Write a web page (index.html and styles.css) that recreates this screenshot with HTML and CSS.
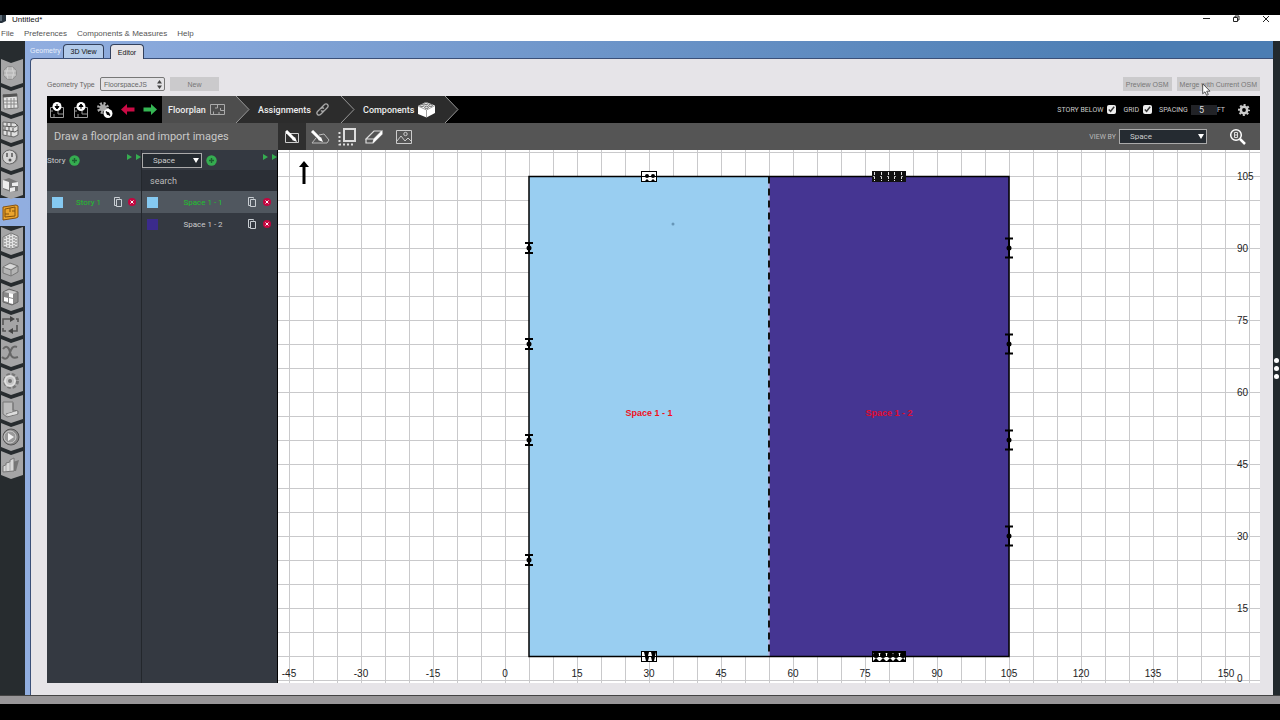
FILE: index.html
```
<!DOCTYPE html>
<html lang="en">
<head>
    <meta charset="UTF-8">
    <meta name="viewport" content="width=device-width, initial-scale=1.0">
    <title>Untitled*</title>
    <link rel="stylesheet" href="styles.css">
</head>
<body>

    <header class="titlebar">
        <svg class="app-icon" width="8" height="9" viewBox="0 0 8 9"><path d="M0 0h6v6l-4 2H0z" fill="#26323d"/><path d="M1 0v6" stroke="#8a9aa8"/></svg>
        <h1>Untitled*</h1>
        <div class="window-buttons">
            <button type="button" aria-label="Minimize"><svg width="8" height="8" viewBox="0 0 8 8"><path d="M1 3.500h7"/></svg></button>
            <button type="button" aria-label="Restore"><svg width="8" height="8" viewBox="0 0 8 8"><path d="M1.500 2.500h4v4h-4zM3 2V1h4v4H6"/></svg></button>
            <button type="button" aria-label="Close"><svg width="8" height="8" viewBox="0 0 8 8"><path d="M1 1l6 6M7 1L1 7"/></svg></button>
        </div>
    </header>

    <nav class="menubar">
        <a href="#">File</a>
        <a href="#">Preferences</a>
        <a href="#">Components &amp; Measures</a>
        <a href="#">Help</a>
    </nav>

    <svg class="defs" width="0" height="0" aria-hidden="true">
        <defs>
            <path id="tab" d="M1 1l10 4 12-4v24l-12 4-10-4z"/>
            <g id="copy" fill="none" stroke="#c9ced3"><path d="M2.500 8.500h-2v-8h5v1"/><path d="M2.500 2.500h5v7h-5z"/></g>
            <g id="remove"><circle cx="4" cy="4" r="4" fill="#c3063f"/><path d="M2.500 2.500l3 3M5.500 2.500l-3 3" stroke="#fff"/></g>
            <g id="add"><circle cx="5.500" cy="5.500" r="5.200" fill="#35ad50"/><path d="M5.500 3v5M3 5.500h5" stroke="#1c5f31" stroke-width="1.400"/></g>
            <g id="forward" fill="#35ad50"><path d="M0 0l5 3-5 3zM9 0l5 3-5 3z"/></g>
        </defs>
    </svg>

    <div class="window">
        <aside class="rail">
            <button type="button" aria-label="Site"><svg viewBox="0 0 25 28"><use href="#tab"/><circle cx="10" cy="15" r="6.500" fill="#b9b9b9" stroke="#8b8b8b"/><path d="M4 13h12M4 17h12M8 9q-3 6 0 12M12 9q3 6 0 12" fill="none" stroke="#d8d8d8" stroke-width=".8"/></svg></button>
            <button type="button" aria-label="Schedules"><svg viewBox="0 0 25 28"><use href="#tab"/><path d="M3 9l14-1 1 14-14 1z" fill="#e6e6e6" stroke="#777"/><path d="M3 10l14-1" stroke="#555" stroke-width="3"/><path d="M4 15h13M4 18h13M7 12v10M11 12v10M14 12v10" stroke="#888"/></svg></button>
            <button type="button" aria-label="Constructions"><svg viewBox="0 0 25 28"><use href="#tab"/><path d="M3 8l12 1 3 3v9l-4 2-11-2z" fill="#e0e0e0" stroke="#666"/><path d="M3 12l12 1M3 16l12 2M7 9v3M11 9v3M5 13v3M9 13v4M13 14v4M7 17v4M11 18v4M15 13l3-2M15 18l3-2" stroke="#555"/></svg></button>
            <button type="button" aria-label="Loads"><svg viewBox="0 0 25 28"><use href="#tab"/><circle cx="11" cy="15" r="7" fill="#858585"/><circle cx="9.500" cy="15" r="7" fill="#d5d5d5" stroke="#666"/><path d="M7 11v4M12 11v4" stroke="#555" stroke-width="1.500"/><circle cx="10" cy="18" r="1.500" fill="#555"/></svg></button>
            <button type="button" aria-label="Space types"><svg viewBox="0 0 25 28"><use href="#tab"/><path d="M3 10l6-2 9 4v9l-7 1-8-3z" fill="#777"/><path d="M3 10l6 2v8l-6-2zM12 13l6-1v4h-6zM10 18l5-1v4l-5 1z" fill="#ededed"/></svg></button>
            <button type="button" class="current" aria-label="Geometry"><svg viewBox="0 0 25 28"><path d="M3 9l13-2 2 1v11l-2 1-13 2z" fill="#eba42d" stroke="#8a530d"/><path d="M5 11v8l10-1V9zM10 10v4M15 13h-3M5 16h4" fill="none" stroke="#80500f"/></svg></button>
            <button type="button" aria-label="Facility"><svg viewBox="0 0 25 28"><use href="#tab"/><path d="M3 11l8-4 7 3v11l-7 2-8-2z" fill="#e2e2e2" stroke="#777"/><path d="M5 11v10M8 10v12M11 8v14M14 10v12M16 11v10" stroke="#777" stroke-dasharray="2 1"/></svg></button>
            <button type="button" aria-label="Spaces"><svg viewBox="0 0 25 28"><use href="#tab"/><path d="M3 13l7-4 8 3v6l-7 4-8-3z" fill="#b4b4b4" stroke="#777"/><path d="M3 13l8 3 7-4M11 16v6" fill="none" stroke="#777"/><path d="M4 13l6-3 6 2-5 3z" fill="#d9d9d9"/></svg></button>
            <button type="button" aria-label="Thermal zones"><svg viewBox="0 0 25 28"><use href="#tab"/><path d="M3 10l6-3 9 3v10l-6 3-9-3z" fill="#888" stroke="#666"/><path d="M4 15l4 1v4l-4-1zM9 16l4 1v5l-4-1zM9 10l4 1v5l-4-1z" fill="#fff"/><path d="M4 10l5-2 8 2-4 2z" fill="#ccc"/></svg></button>
            <button type="button" aria-label="HVAC systems"><svg viewBox="0 0 25 28"><use href="#tab"/><path d="M3 15V9h8M17 15v6h-5M18 12V9h-2M3 18v3h3" fill="none" stroke="#555" stroke-width="1.600"/><path d="M10 6l5 3-5 3zM13 18l-5 3 5 3z" fill="#444"/></svg></button>
            <button type="button" aria-label="Output variables"><svg viewBox="0 0 25 28"><use href="#tab"/><path d="M3 11c3-4 6-2 7 3s3 7 8 5M17 9c-5-2-6 3-8 8s-5 4-7 2" fill="none" stroke="#666" stroke-width="2"/></svg></button>
            <button type="button" aria-label="Simulation settings"><svg viewBox="0 0 25 28"><use href="#tab"/><circle cx="11" cy="15" r="6" fill="none" stroke="#777" stroke-width="4" stroke-dasharray="3 1.700"/><circle cx="10" cy="15" r="5" fill="#c5c5c5" stroke="#e0e0e0" stroke-width="2"/><circle cx="10" cy="15" r="2" fill="#777"/></svg></button>
            <button type="button" aria-label="Measures"><svg viewBox="0 0 25 28"><use href="#tab"/><path d="M3 8h10v8l5 1v3l-11 3-4-3z" fill="#bdbdbd" stroke="#777"/><path d="M6 20l11-3M13 9v9" stroke="#777"/><path d="M7 20l10-3v3L8 22z" fill="#ddd"/></svg></button>
            <button type="button" aria-label="Run simulation"><svg viewBox="0 0 25 28"><use href="#tab"/><circle cx="11" cy="15" r="8" fill="#858585" stroke="#555"/><circle cx="10" cy="15" r="6" fill="#999" stroke="#ccc"/><path d="M8 11l6 4-6 4z" fill="#f2f2f2"/></svg></button>
            <button type="button" aria-label="Results"><svg viewBox="0 0 25 28"><use href="#tab"/><path d="M13 12l6-2-3 11h-3z" fill="#777"/><path d="M3 16l3-1v-2l4-1v-2l4-2v13l-11 1z" fill="#d8d8d8" stroke="#777"/><path d="M6 15v6M10 12v9" stroke="#aaa"/></svg></button>
        </aside>

        <main class="geometry">
            <div class="tabs">
                <h2>Geometry</h2>
                <button type="button" class="tab">3D View</button>
                <button type="button" class="tab active">Editor</button>
            </div>

            <div class="page">
                <div class="type-row">
                    <label for="geometryType">Geometry Type</label>
                    <span class="type-select">
                        <select id="geometryType"><option>FloorspaceJS</option></select>
                        <svg width="5" height="9" viewBox="0 0 5 9"><path d="M0 3.500L2.500 0 5 3.500zM0 5.500h5L2.500 9z" fill="#444"/></svg>
                    </span>
                    <button type="button" class="btn new" disabled>New</button>
                    <span class="spacer"></span>
                    <button type="button" class="btn">Preview OSM</button>
                    <span class="merge">
                        <button type="button" class="btn">Merge with Current OSM</button>
                        <svg class="pointer" width="9" height="13" viewBox="0 0 9 13"><path d="M.7.8v10l2.300-2 1.600 3.500 1.700-.8-1.600-3.300h3.300z" fill="#fff" stroke="#444" stroke-width=".9"/></svg>
                    </span>
                </div>

                <div class="editor">
                    <div class="steps">
                        <div class="file-tools">
                            <button type="button" aria-label="Open floorplan"><svg width="16" height="18" viewBox="0 0 16 18"><path d="M4 6.500H1.500v10h13v-10H12M5 16v-3M9 10v3h5M2 10h2" fill="none" stroke="#999"/><circle cx="8" cy="5.500" r="4.500" fill="#fff"/><path d="M8 3v3M6 5.500h4L8 8z" fill="#000" stroke="#000"/></svg></button>
                            <button type="button" aria-label="Save floorplan"><svg width="16" height="18" viewBox="0 0 16 18"><path d="M4 6.500H1.500v10h13v-10H12M5 16v-3M9 10v3h5M2 10h2" fill="none" stroke="#999"/><circle cx="8" cy="5.500" r="4.500" fill="#fff"/><path d="M8 8V5M6 5.500h4L8 3z" fill="#000" stroke="#000"/></svg></button>
                            <button type="button" aria-label="Project settings"><svg width="16" height="18" viewBox="0 0 16 18"><circle cx="6" cy="7" r="3.500" fill="#aaa"/><circle cx="6" cy="7" r="4.500" fill="none" stroke="#aaa" stroke-width="3" stroke-dasharray="2 1.530"/><circle cx="11" cy="12.500" r="4.500" fill="#fff"/><path d="M9 10.500l4 4" stroke="#000" stroke-width="1.600"/><circle cx="11" cy="12.500" r="1.500"/></svg></button>
                            <button type="button" aria-label="Undo"><svg width="14" height="11" viewBox="0 0 14 11"><path d="M0 5.500L6 0v3.500h7.500v4H6V11z" fill="#cb0b45"/></svg></button>
                            <button type="button" aria-label="Redo"><svg width="14" height="11" viewBox="0 0 14 11"><path d="M14 5.500L8 0v3.500H.5v4H8V11z" fill="#35b653"/></svg></button>
                        </div>
                        <button type="button" class="step on">Floorplan
                            <svg width="15" height="12" viewBox="0 0 15 12"><path d="M.5.500h14v10H.5zM3.500 10V7.500M7.500 1v3H5M10.500 4v2.500H14M9 10V8" fill="none" stroke="#aaa"/></svg>
                        </button>
                        <svg class="chevron on" width="14" height="27" viewBox="0 0 14 27"><path d="M0 0l13 13.500L0 27z"/><path class="edge" d="M0 0l13 13.500L0 27"/></svg>
                        <button type="button" class="step assign">Assignments
                            <svg width="13" height="13" viewBox="0 0 13 13"><g fill="none" stroke="#aaa" stroke-width="1.300"><path d="M5 5l3-3q2-2 3.500-.5T11 5L8.500 7.500Q6.500 9 5 7.500"/><path d="M8 8l-3 3q-2 2-3.500.5T2 8l2.500-2.500Q6.500 4 8 5.500"/></g></svg>
                        </button>
                        <svg class="chevron" width="14" height="27" viewBox="0 0 14 27"><path d="M0 0l13 13.500L0 27z"/><path class="edge" d="M0 0l13 13.500L0 27"/></svg>
                        <button type="button" class="step comps">Components
                            <svg width="19" height="17" viewBox="0 0 19 17"><path d="M1 5l8-4 9 3.500V12l-8.500 4.500L1 13z" fill="#fff"/><path d="M1 5l8.500 4L18 4.500M9.500 9v7" fill="none" stroke="#888" stroke-width=".8"/><g fill="#ddd" stroke="#555" stroke-width=".8"><ellipse cx="9" cy="2.500" rx="2" ry="1.200"/><ellipse cx="5" cy="4.500" rx="2" ry="1.200"/><ellipse cx="13.500" cy="4.300" rx="2" ry="1.200"/><ellipse cx="9.500" cy="6.300" rx="2" ry="1.200"/></g></svg>
                        </button>
                        <svg class="chevron last" width="14" height="27" viewBox="0 0 14 27"><path d="M0 0l13 13.500L0 27z"/><path class="edge" d="M0 0l13 13.500L0 27"/></svg>
                        <span class="spacer"></span>
                        <div class="grid-settings">
                            <label>STORY BELOW <input type="checkbox" checked></label>
                            <label>GRID <input type="checkbox" checked></label>
                            <label class="spacing">SPACING <input type="text" value="5"></label>
                            <span>FT</span>
                            <button type="button" aria-label="Settings"><svg width="12" height="12" viewBox="0 0 12 12"><circle cx="6" cy="6" r="3.200" fill="none" stroke="#ccc" stroke-width="2.600"/><circle cx="6" cy="6" r="5" fill="none" stroke="#ccc" stroke-width="2" stroke-dasharray="2 1.927" stroke-dashoffset="1"/></svg></button>
                        </div>
                    </div>

                    <div class="toolbar">
                        <p class="hint">Draw a floorplan and import images</p>
                        <div class="draw-tools">
                            <button type="button" class="selected" aria-label="Rectangle"><svg width="16" height="14" viewBox="0 0 16 14"><path d="M1.500 3.500h13v9h-13z" fill="none" stroke="#ccc"/><path d="M2 1l8 8" stroke="#fff" stroke-width="3"/><path d="M11 7l2 5-5-2z" fill="#fff"/></svg></button>
                            <button type="button" aria-label="Polygon"><svg width="20" height="14" viewBox="0 0 20 14"><path d="M9 5l5-1 5 6-2 3H2l4-5" fill="none" stroke="#bbb"/><path d="M2 1l8 8" stroke="#fff" stroke-width="3"/><path d="M11 7l2 5-5-2z" fill="#fff"/></svg></button>
                            <button type="button" aria-label="Fill"><svg width="18" height="18" viewBox="0 0 18 18"><path d="M6 1h11v12H6z" fill="none" stroke="#ddd" stroke-width="2"/><path d="M1.500 4v12.500H15" fill="none" stroke="#ddd" stroke-width="2" stroke-dasharray="2 2"/></svg></button>
                            <button type="button" aria-label="Eraser"><svg width="18" height="14" viewBox="0 0 18 14"><path d="M1 9l8-8h8l-8 8zM1 9v4h7l9-9V1M9 9l-1 4" fill="none" stroke="#ddd" stroke-width="1.200"/><path d="M9 9l8-8v3l-9 9z" fill="#fff"/></svg></button>
                            <button type="button" class="image-tool" aria-label="Import image"><svg width="16" height="14" viewBox="0 0 16 14"><path d="M.5.5h15v13H.5zM1 11l4-5 4 5 3-3 3 3" fill="none" stroke="#ccc"/><circle cx="9.500" cy="4" r="1.700" fill="none" stroke="#ccc"/></svg></button>
                        </div>
                        <span class="spacer"></span>
                        <label class="view-label" for="viewBy">VIEW BY</label>
                        <span class="dropdown view"><select id="viewBy"><option>Space</option></select></span>
                        <button type="button" class="zoom-fit" aria-label="Zoom to fit"><svg width="17" height="17" viewBox="0 0 17 17"><circle cx="7" cy="7" r="5.300" fill="none" stroke="#fff" stroke-width="1.500"/><path d="M11 11l5 5" stroke="#fff" stroke-width="2.500"/><path d="M5.500 4.500h3v5h-3z" fill="none" stroke="#ddd"/><path d="M5 7h4" stroke="#ddd"/></svg></button>
                    </div>

                    <div class="workspace">
                        <section class="stories">
                            <div class="list-head">
                                <h3>Story</h3>
                                <button type="button" aria-label="Add story"><svg width="11" height="11"><use href="#add"/></svg></button>
                                <span class="spacer"></span>
                                <button type="button" class="expand" aria-label="Expand stories"><svg width="14" height="6"><use href="#forward"/></svg></button>
                            </div>
                            <div class="search-gap"></div>
                            <div class="item picked">
                                <i class="swatch"></i><span>Story 1</span>
                                <button type="button" aria-label="Copy"><svg width="8" height="10"><use href="#copy"/></svg></button>
                                <button type="button" aria-label="Delete"><svg width="8" height="8"><use href="#remove"/></svg></button>
                            </div>
                        </section>

                        <section class="spaces">
                            <div class="list-head">
                                <span class="dropdown"><select aria-label="Object type"><option>Space</option></select></span>
                                <button type="button" aria-label="Add space"><svg width="11" height="11"><use href="#add"/></svg></button>
                                <span class="spacer"></span>
                                <button type="button" class="expand" aria-label="Expand spaces"><svg width="14" height="6"><use href="#forward"/></svg></button>
                            </div>
                            <input class="search" type="text" placeholder="search" aria-label="search">
                            <div class="item picked">
                                <i class="swatch"></i><span>Space 1 - 1</span>
                                <button type="button" aria-label="Copy"><svg width="8" height="10"><use href="#copy"/></svg></button>
                                <button type="button" aria-label="Delete"><svg width="8" height="8"><use href="#remove"/></svg></button>
                            </div>
                            <div class="item">
                                <i class="swatch purple"></i><span>Space 1 - 2</span>
                                <button type="button" aria-label="Copy"><svg width="8" height="10"><use href="#copy"/></svg></button>
                                <button type="button" aria-label="Delete"><svg width="8" height="8"><use href="#remove"/></svg></button>
                            </div>
                        </section>

                        <!-- 5 ft = 24px, origin at (227, 530) -->
                        <div class="canvas">
                            <svg width="100%" height="100%">
                                <defs>
                                    <pattern id="grid" x="11" y="2" width="24" height="24" patternUnits="userSpaceOnUse"><path d="M.5 0v24M0 .5h24" stroke="#c9c9cb" fill="none"/></pattern>
                                    <g id="door"><path d="M-4-5h8M-4 5h8M0-5V5" stroke="#000" stroke-width="2"/><circle r="2.500"/></g>
                                    <g id="window"><path d="M-4-9.500h8M-4 9.500h8M0-9v18" stroke="#000" stroke-width="2"/><circle r="2.500"/></g>
                                </defs>
                                <rect width="100%" height="100%" fill="url(#grid)"/>
                                <path d="M26 34V15" stroke="#000" stroke-width="3"/><path d="M21 17l5-6 5 6z"/>

                                <rect x="251" y="26.500" width="240" height="480" fill="#99cef1"/>
                                <rect x="491" y="26.500" width="240" height="480" fill="#453592"/>
                                <path d="M491 26.500v480" stroke="#b9b4e0" stroke-width="1.500"/>
                                <path d="M491 26.500v480" stroke="#111" stroke-width="2" stroke-dasharray="7 5"/>
                                <path d="M251 26.500h480v480H251z" fill="none" stroke="#000" stroke-width="1.500"/>

                                <use href="#door" x="251" y="98"/>
                                <use href="#door" x="251" y="194"/>
                                <use href="#door" x="251" y="290"/>
                                <use href="#door" x="251" y="410"/>
                                <use href="#window" x="731" y="98"/>
                                <use href="#window" x="731" y="194"/>
                                <use href="#window" x="731" y="290"/>
                                <use href="#window" x="731" y="386"/>

                                <g stroke="#000"><rect x="363.500" y="21.500" width="15" height="10" fill="#fff"/><path d="M364 26.500h14"/></g>
                                <circle cx="369" cy="26" r="2"/><circle cx="375" cy="26" r="2"/><path d="M367 31l2-2 2 2zM373 31l2-2 2 2z"/>
                                <g stroke="#000"><rect x="363.500" y="501.500" width="15" height="10" fill="#fff"/><path d="M364 506.500h14"/></g>
                                <path d="M366 502h5l-1 4h-3zM373 502h5l-1 4h-3zM367 507h4l-1 4h-2zM373 507h4l-1 4h-2z"/>

                                <rect x="594" y="21" width="34" height="11" fill="#111"/>
                                <path d="M596.500 22v9M603.500 22v9M610.500 22v9M616.500 22v9M623.500 22v9" stroke="#ddd" stroke-dasharray="3 1"/><path d="M595 26.500h32" stroke="#aaa" stroke-dasharray="2 5"/>
                                <rect x="594.500" y="501.500" width="33" height="10" fill="#fff" stroke="#000"/>
                                <path d="M595 502.500h33M595 506.500h33" stroke="#000"/>
                                <g><circle cx="598" cy="505" r="3"/><circle cx="605" cy="505" r="3"/><circle cx="612" cy="505" r="3"/><circle cx="618" cy="505" r="3"/><circle cx="625" cy="505" r="3"/></g>
                                <path d="M595 511l3-3 3 3zM602 511l3-3 3 3zM609 511l3-3 3 3zM615 511l3-3 3 3zM622 511l3-3 3 3z"/>
                                <circle cx="395" cy="74" r="1.500" fill="#6796b8"/>

                                <g class="space-names">
                                    <text x="371" y="266">Space 1 - 1</text>
                                    <text x="611" y="266" class="dim">Space 1 - 2</text>
                                </g>
                                <g class="x-axis">
                                    <text x="11" y="527">-45</text>
                                    <text x="83" y="527">-30</text>
                                    <text x="155" y="527">-15</text>
                                    <text x="227" y="527">0</text>
                                    <text x="299" y="527">15</text>
                                    <text x="371" y="527">30</text>
                                    <text x="443" y="527">45</text>
                                    <text x="515" y="527">60</text>
                                    <text x="587" y="527">75</text>
                                    <text x="659" y="527">90</text>
                                    <text x="731" y="527">105</text>
                                    <text x="803" y="527">120</text>
                                    <text x="875" y="527">135</text>
                                    <text x="948" y="527">150</text>
                                </g>
                                <g class="y-axis">
                                    <text x="959" y="30">105</text>
                                    <text x="959" y="102">90</text>
                                    <text x="959" y="174">75</text>
                                    <text x="959" y="246">60</text>
                                    <text x="959" y="318">45</text>
                                    <text x="959" y="390">30</text>
                                    <text x="959" y="462">15</text>
                                    <text x="959" y="532">0</text>
                                </g>
                            </svg>
                        </div>
                    </div>
                </div>
            </div>
        </main>
        <div class="right-edge"><span></span><span></span><span></span></div>
    </div>
    <div class="statusbar"></div>

</body>
</html>
```
FILE: styles.css
```
* {
    box-sizing: border-box;
    margin: 0;
    padding: 0;
}

body {
    font-family: Roboto, sans-serif;
    font-size: 9px;
    background: #000;
    display: flex;
    flex-direction: column;
    height: 100vh;
    min-height: 480px;
    padding: 15px 0 16px;
    overflow: hidden;
}

button {
    background: none;
    border: none;
    color: inherit;
    font: inherit;
}

button svg {
    display: block;
}

.defs {
    position: absolute;
}

.spacer {
    flex: 1;
}

/* Window frame */
.titlebar {
    display: flex;
    align-items: flex-start;
    height: 12px;
    background: #fff;
    padding-right: 10px;
}

.titlebar h1 {
    font-family: "Liberation Sans", Arial, sans-serif;
    font-size: 8px;
    line-height: 9px;
    font-weight: normal;
    margin-left: 4px;
    color: #111;
}

.window-buttons {
    display: flex;
    gap: 22px;
    margin-left: auto;
}

.window-buttons svg {
    fill: none;
    stroke: #222;
}

.menubar {
    display: flex;
    gap: 10px;
    height: 14px;
    padding-left: 1px;
    background: #fff;
}

.menubar a {
    font-family: "Liberation Sans", Arial, sans-serif;
    font-size: 8px;
    line-height: 14px;
    color: #555;
    text-decoration: none;
}

.window {
    flex: 1;
    min-height: 0;
    display: flex;
    background: #272c2f;
}

.rail {
    width: 25px;
    padding-top: 17px;
}

.rail button {
    display: block;
    width: 25px;
    height: 28px;
}

.rail svg {
    width: 25px;
    height: 28px;
    fill: #a5a5a6;
    overflow: visible;
}

.rail .current {
    background: #91aee0;
}

.right-edge {
    width: 7px;
    background: #22292d;
    display: flex;
    flex-direction: column;
    align-items: center;
    justify-content: center;
    gap: 3px;
}

.right-edge span {
    width: 5px;
    height: 5px;
    border-radius: 50%;
    background: #fff;
}

.statusbar {
    height: 9px;
    background: #989698;
    border-top: 1px solid #444;
}

/* Geometry page */
.geometry {
    flex: 1;
    min-width: 0;
    display: flex;
    flex-direction: column;
    padding-left: 5px;
    background: linear-gradient(90deg, #91aee0, #4b7db3 90%);
}

.tabs {
    display: flex;
    align-items: flex-end;
    height: 17px;
    font-family: "Liberation Sans", Arial, sans-serif;
    font-size: 7px;
}

.tabs h2 {
    font-size: 7px;
    font-weight: normal;
    line-height: 14px;
    color: #e8effc;
    width: 33px;
}

.tab {
    height: 14px;
    width: 41px;
    border: 1px solid #32405c;
    border-bottom: none;
    border-radius: 4px 4px 0 0;
    background: #b3cbea;
    color: #111;
}

.tab.active {
    width: 34px;
    height: 15px;
    margin: 0 0 -1px 6px;
    background: #e6e4e8;
    position: relative;
}

.page {
    flex: 1;
    min-height: 0;
    display: flex;
    flex-direction: column;
    padding: 18px 13px 12px 16px;
    background: #e6e4e8;
    border: 1px solid #3a4f78;
    border-width: 1px 0 0 1px;
    border-radius: 4px 0 0 0;
}

.type-row {
    display: flex;
    align-items: center;
    height: 14px;
    margin-bottom: 5px;
    font-family: "Liberation Sans", Arial, sans-serif;
    font-size: 7px;
    color: #666;
}

.type-row label {
    width: 50px;
    white-space: nowrap;
}

.type-select {
    position: relative;
    margin: 0 5px 0 3px;
}

.type-select select {
    appearance: none;
    display: block;
    width: 65px;
    height: 14px;
    padding-left: 3px;
    border: 1px solid #777;
    border-radius: 2px;
    background: #e3e2e5;
    color: #666;
    font: inherit;
}

.type-select svg {
    position: absolute;
    right: 3px;
    top: 3px;
}

.btn {
    display: block;
    height: 14px;
    padding: 0 3px;
    background: #cbcacc;
    color: #777;
    white-space: nowrap;
}

.btn.new {
    width: 49px;
}

.merge {
    position: relative;
    margin-left: 5px;
}

.pointer {
    position: absolute;
    left: 25px;
    top: 6px;
}

/* Floorplan editor */
.editor {
    flex: 1;
    min-height: 0;
    display: flex;
    flex-direction: column;
}

.steps {
    display: flex;
    height: 27px;
    background: #000;
    color: #ddd;
}

.file-tools {
    display: flex;
    align-items: center;
    gap: 8px;
    width: 115px;
    padding-left: 2px;
}

.step {
    display: flex;
    align-items: center;
    gap: 4px;
    width: 74px;
    padding-left: 6px;
    background: #2c2c2c;
    color: #eee;
    font-weight: 500;
    white-space: nowrap;
}

.step.on {
    background: #4d4d4d;
}

.step.assign {
    width: 91px;
    padding-left: 8px;
    gap: 5px;
}

.step.comps {
    width: 90px;
    padding-left: 8px;
    gap: 3px;
}

.chevron {
    background: #2c2c2c;
    fill: #2c2c2c;
}

.chevron.on {
    fill: #4d4d4d;
}

.chevron.last {
    background: #000;
}

.chevron .edge {
    fill: none;
    stroke: #999;
}

.grid-settings {
    display: flex;
    align-items: center;
    padding-right: 10px;
    font-size: 7px;
    color: #ccc;
}

.grid-settings label {
    display: flex;
    align-items: center;
    gap: 4px;
    margin-right: 7px;
}

.grid-settings input[type="checkbox"] {
    width: 9px;
    height: 9px;
    accent-color: #eee;
}

.grid-settings .spacing {
    gap: 3px;
    margin-right: 0;
}

.grid-settings input[type="text"] {
    width: 26px;
    height: 10px;
    padding-left: 8px;
    border: none;
    background: #222327;
    color: #ddd;
    font: 9px Roboto, sans-serif;
}

.grid-settings button {
    margin-left: 13px;
}

.toolbar {
    display: flex;
    align-items: center;
    height: 27px;
    background: #555;
}

.hint {
    width: 231px;
    padding-left: 7px;
    font-size: 11px;
    color: #c8c8c8;
}

.draw-tools {
    display: flex;
    align-self: stretch;
}

.draw-tools button {
    width: 27px;
    display: flex;
    align-items: center;
    justify-content: center;
}

.draw-tools .selected {
    width: 28px;
    background: #2f2f2f;
}

.draw-tools .image-tool {
    margin-left: 3px;
}

.view-label {
    font-size: 7px;
    color: #bbb;
    margin-right: 3px;
}

.dropdown {
    position: relative;
}

.dropdown::after {
    content: "";
    position: absolute;
    right: 3px;
    top: 5px;
    border: 3px solid transparent;
    border-top: 5px solid #fff;
    border-bottom: none;
}

.dropdown select {
    appearance: none;
    display: block;
    width: 60px;
    height: 15px;
    padding-left: 10px;
    border: 1px solid #aaa;
    background: #252b31;
    color: #ccc;
    font: 8px Roboto, sans-serif;
}

.dropdown.view select {
    width: 88px;
}

.zoom-fit {
    margin: 0 14px 0 22px;
}

.workspace {
    flex: 1;
    min-height: 0;
    display: flex;
    background: #343941;
}

.stories {
    width: 95px;
    border-right: 1px solid #23272c;
}

.spaces {
    width: 136px;
    border-right: 1px solid #000;
}

.list-head {
    display: flex;
    align-items: center;
    height: 20px;
    gap: 4px;
}

.list-head h3 {
    font-size: 8px;
    font-weight: normal;
    color: #ccc;
}

.list-head .expand {
    align-self: flex-start;
    margin-top: 4px;
}

.search-gap,
.search {
    display: block;
    height: 21px;
}

.search {
    width: 100%;
    padding: 0 8px;
    border: none;
    background: #2b2f36;
    color: #ccc;
    font: 9px Roboto, sans-serif;
}

.search::placeholder {
    color: #bbb;
}

.item {
    display: flex;
    align-items: center;
    gap: 7px;
    height: 22px;
    padding: 0 6px 0 5px;
    font-size: 8px;
    color: #ccc;
}

.item span {
    flex: 1;
    text-align: center;
}

.stories .item {
    gap: 6px;
    padding-right: 5px;
}

.item.picked {
    background: #50575f;
    color: #21c12e;
}

.swatch {
    width: 11px;
    height: 11px;
    background: #85c9f1;
}

.swatch.purple {
    background: #3b2b8c;
}

.canvas {
    flex: 1;
    min-width: 0;
    background: #fff;
    overflow-x: clip;
}

.canvas svg {
    display: block;
    overflow: visible;
    font-family: "Liberation Sans", Arial, sans-serif;
    font-size: 10px;
}

.x-axis text,
.space-names text {
    text-anchor: middle;
}

.x-axis,
.y-axis {
    fill: #222;
}

.space-names {
    fill: #f0101c;
    font-size: 9px;
    font-weight: bold;
}

.space-names .dim {
    fill: #e00c30;
}
```
